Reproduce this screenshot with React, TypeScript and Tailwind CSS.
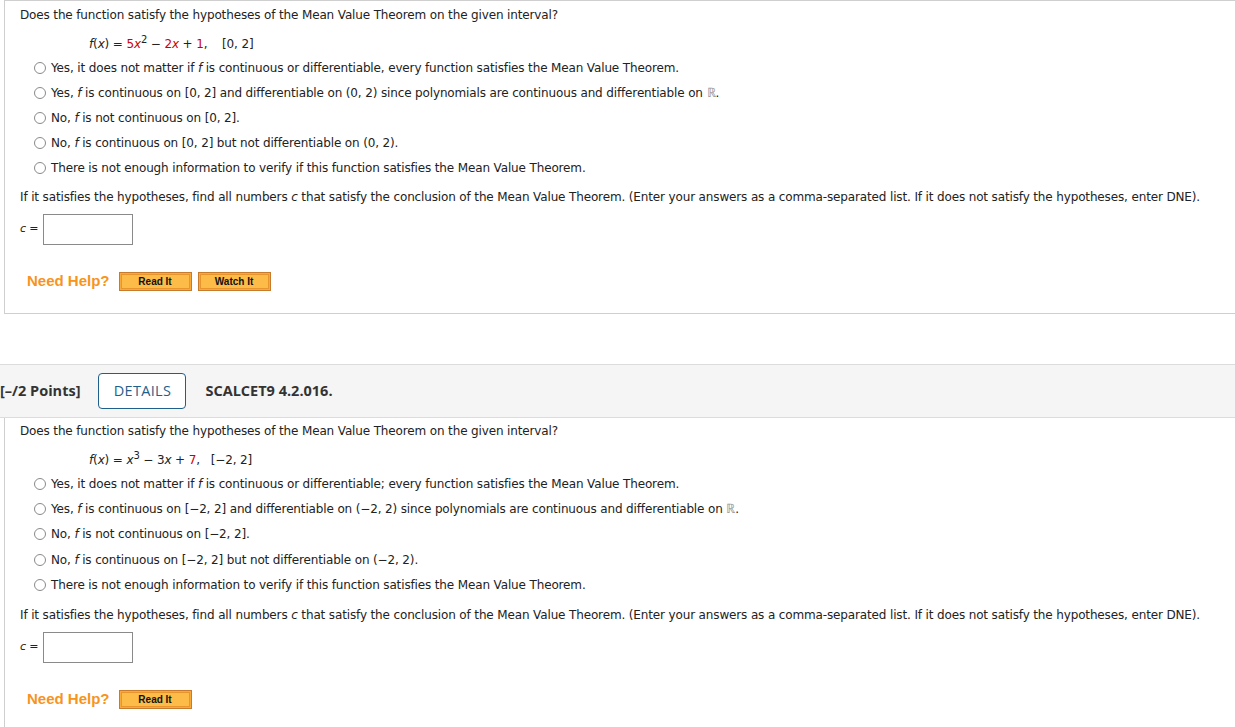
import React from "react";

const BODY = "font-['DejaVu_Sans',Verdana,sans-serif] text-[12px] tracking-[-0.14px] text-[#222]";

function Radio() {
  return <span className="inline-block w-[12px] h-[12px] rounded-full border border-[#8a8a8a] bg-white mr-[5px] shrink-0" />;
}

function HelpButton({ label }: { label: string }) {
  return (
    <span className="inline-flex items-center justify-center w-[73px] h-[19px] border border-[#c77b2c] bg-[#f9a93a] p-[1px]">
      <span className="flex items-center justify-center w-full h-full border border-[#e8952e] bg-[#fdbb47] font-['Liberation_Sans',Arial,sans-serif] text-[10px] font-bold tracking-normal text-[#111]">
        {label}
      </span>
    </span>
  );
}

type Q = {
  fn: React.ReactNode;
  opts: React.ReactNode[];
  watch: boolean;
  top: string;
  row: string;
};

function Question({ q }: { q: Q }) {
  return (
    <div className={`${BODY} pl-[15px] ${q.top}`}>
      <p className="h-[18px] leading-[18px]">Does the function satisfy the hypotheses of the Mean Value Theorem on the given interval?</p>
      <div className="pl-[69px] mt-[11px] h-[18px] leading-[18px]">{q.fn}</div>
      <div className="mt-[2px]">
        {q.opts.map((o, i) => (
          <div key={i} className={`flex items-center ${q.row} pl-[14px]`}>
            <Radio />
            <span>{o}</span>
          </div>
        ))}
      </div>
      <p className="mt-[8px] h-[18px] leading-[18px] whitespace-nowrap">
        If it satisfies the hypotheses, find all numbers <i>c</i> that satisfy the conclusion of the Mean Value Theorem. (Enter your answers as a comma-separated list. If it does not satisfy the hypotheses, enter DNE).
      </p>
      <div className="flex items-center mt-[8px]">
        <span className="text-[11px] italic mr-[5px]">c =</span>
        <span className="w-[90px] h-[31px] border border-[#8a8a8a] bg-white" />
      </div>
      <div className="flex items-center mt-[25px] pl-[7px] gap-[6px]">
        <span className="font-['Liberation_Sans',Arial,sans-serif] text-[15px] font-bold tracking-normal text-[#f7941d] mr-[3px]">Need Help?</span>
        <HelpButton label="Read It" />
        {q.watch && <HelpButton label="Watch It" />}
      </div>
    </div>
  );
}

const f = <i>f</i>;
const red = (s: string) => <span className="text-[#cc0000]">{s}</span>;
const R = <span className="font-['Liberation_Serif',serif] text-[13px] text-[#999]">ℝ</span>;

const q1: Q = {
  top: "pt-[5px]",
  row: "h-[25px]",
  fn: (
    <span>
      <i>f</i>(<i>x</i>) = {red("5")}<i className="text-[#cc0000]">x</i><sup className="text-[10px]">2</sup> − {red("2")}<i className="text-[#cc0000]">x</i> + {red("1")},&nbsp;&nbsp;&nbsp; [0, 2]
    </span>
  ),
  opts: [
    <>Yes, it does not matter if {f} is continuous or differentiable, every function satisfies the Mean Value Theorem.</>,
    <>Yes, {f} is continuous on [0, 2] and differentiable on (0, 2) since polynomials are continuous and differentiable on {R}.</>,
    <>No, {f} is not continuous on [0, 2].</>,
    <>No, {f} is continuous on [0, 2] but not differentiable on (0, 2).</>,
    <>There is not enough information to verify if this function satisfies the Mean Value Theorem.</>,
  ],
  watch: true,
};

const q2: Q = {
  top: "pt-[4px]",
  row: "h-[25.4px]",
  fn: (
    <span>
      <i>f</i>(<i>x</i>) = <i>x</i><sup className="text-[10px]">3</sup> − 3<i>x</i> + {red("7")},&nbsp;&nbsp; [−2, 2]
    </span>
  ),
  opts: [
    <>Yes, it does not matter if {f} is continuous or differentiable; every function satisfies the Mean Value Theorem.</>,
    <>Yes, {f} is continuous on [−2, 2] and differentiable on (−2, 2) since polynomials are continuous and differentiable on {R}.</>,
    <>No, {f} is not continuous on [−2, 2].</>,
    <>No, {f} is continuous on [−2, 2] but not differentiable on (−2, 2).</>,
    <>There is not enough information to verify if this function satisfies the Mean Value Theorem.</>,
  ],
  watch: false,
};

export default function App() {
  return (
    <div className="w-[1235px] h-[727px] overflow-hidden bg-white">
      <div className="ml-[4px] border-l border-b border-t border-[#cfcfcf] h-[314px]">
        <Question q={q1} />
      </div>
      <div className="mt-[50px] h-[54px] bg-[#f5f5f5] border-t border-b border-[#dcdcdc] flex items-center font-['Open_Sans',sans-serif] text-[#333]">
        <span className="text-[14.5px] font-bold">[–/2 Points]</span>
        <span className="ml-[18px] w-[88px] h-[36px] rounded-[4px] border border-[#1f5f8b] bg-white flex items-center justify-center text-[14.5px] text-[#1f5f8b] tracking-[0.3px]">DETAILS</span>
        <span className="ml-[19px] text-[14.5px] font-bold">SCALCET9 4.2.016.</span>
      </div>
      <div className="ml-[4px] border-l border-[#cfcfcf] h-[400px]">
        <Question q={q2} />
      </div>
    </div>
  );
}
